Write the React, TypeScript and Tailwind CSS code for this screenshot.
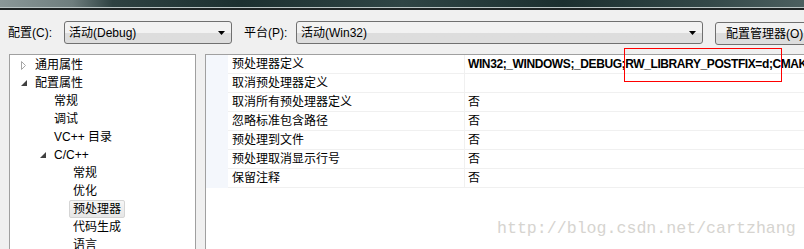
import React from 'react';

const FONT = { fontFamily: '"Liberation Sans", "Noto Sans CJK SC", sans-serif' };

type TreeItem = { label: string; level: number; toggle?: 'open' | 'closed'; selected?: boolean };

const treeItems: TreeItem[] = [
  { label: '通用属性', level: 0, toggle: 'closed' },
  { label: '配置属性', level: 0, toggle: 'open' },
  { label: '常规', level: 1 },
  { label: '调试', level: 1 },
  { label: 'VC++ 目录', level: 1 },
  { label: 'C/C++', level: 1, toggle: 'open' },
  { label: '常规', level: 2 },
  { label: '优化', level: 2 },
  { label: '预处理器', level: 2, selected: true },
  { label: '代码生成', level: 2 },
  { label: '语言', level: 2 },
];

const props: [string, string, boolean?][] = [
  ['预处理器定义', 'WIN32;_WINDOWS;_DEBUG;RW_LIBRARY_POSTFIX=d;CMAKE_INTDIR="Debug";%(PreprocessorDefinitions)', true],
  ['取消预处理器定义', ''],
  ['取消所有预处理器定义', '否'],
  ['忽略标准包含路径', '否'],
  ['预处理到文件', '否'],
  ['预处理取消显示行号', '否'],
  ['保留注释', '否'],
];

const Arrow = () => (
  <svg width="7" height="4" viewBox="0 0 7 4">
    <polygon points="0,0 7,0 3.5,4" fill="#000" />
  </svg>
);

const Toggle = ({ kind }: { kind: 'open' | 'closed' }) =>
  kind === 'closed' ? (
    <svg width="6" height="9" viewBox="0 0 6 9">
      <polygon points="0.5,0.5 4.5,4.5 0.5,8.5" fill="#fff" stroke="#a6a6a6" />
    </svg>
  ) : (
    <svg width="6" height="6" viewBox="0 0 6 6">
      <polygon points="6,0 6,6 0,6" fill="#404040" />
    </svg>
  );

const Combo = ({ text, width }: { text: string; width: string }) => (
  <div
    className={`${width} shrink-0 h-[23px] flex items-center justify-between pl-[4px] pr-[6px] border border-[#707070] rounded-[3px] bg-gradient-to-b from-[#f2f2f2] from-50% to-[#dddddd] to-50%`}
  >
    <span className="text-[12px] text-black">{text}</span>
    <Arrow />
  </div>
);

export default function App() {
  return (
    <div className="relative w-[804px] h-[249px] overflow-hidden bg-[#f0f0f0] text-black" style={FONT}>
      {/* window title strip */}
      <div className="h-[7px] bg-[linear-gradient(90deg,#8a9898_0%,#6e7e7e_9%,#2e4242_14%,#1c3030_30%,#2f4545_50%,#1b2f2f_70%,#334848_88%,#4c6060_100%)]" />
      <div className="h-px bg-[#b9c4c4]" />
      <div className="h-[2px] bg-[#1e2424]" />

      {/* toolbar */}
      <div className="flex items-center mt-[11px] h-[23px] w-[900px]">
        <span className="ml-[8px] w-[56px] shrink-0 text-[12px]">配置(C):</span>
        <Combo text="活动(Debug)" width="w-[168px]" />
        <span className="ml-[12px] w-[52px] shrink-0 text-[12px]">平台(P):</span>
        <Combo text="活动(Win32)" width="w-[407px]" />
        <div className="ml-[12px] mt-[2px] h-[23px] w-[120px] shrink-0 flex items-center pl-[10px] border border-[#707070] rounded-[3px] bg-gradient-to-b from-[#f2f2f2] from-50% to-[#dddddd] to-50% text-[12px] whitespace-nowrap">
          配置管理器(O)...
        </div>
      </div>

      {/* panels */}
      <div className="flex mt-[10px] h-[200px]">
        <div className="ml-[9px] w-[187px] shrink-0 border border-[#a0a0a0] bg-white pt-[1px]">
          {treeItems.map((it, i) => (
            <div key={i} className="h-[18px] flex items-center" style={{ paddingLeft: 11 + it.level * 19 }}>
              <span className="w-[14px] flex items-center">{it.toggle && <Toggle kind={it.toggle} />}</span>
              <span
                className={
                  it.selected
                    ? '-ml-[4px] px-[3px] h-[18px] flex items-center rounded-[2px] border border-[#d5d5d5] bg-gradient-to-b from-[#f6f6f6] to-[#e6e6e6] text-[12px]'
                    : 'text-[12px] whitespace-nowrap'
                }
              >
                {it.label}
              </span>
            </div>
          ))}
        </div>

        <div className="ml-[9px] w-[620px] shrink-0 border border-[#a0a0a0] bg-white">
          {props.map(([name, value, bold], i) => (
            <div key={i} className="flex h-[19px]">
              <div className="w-[22px] shrink-0 bg-[#f4f7fc]" />
              <div className="w-[237px] shrink-0 pl-[4px] flex items-center border-b border-r border-[#f0f0f0] text-[12px]">
                {name}
              </div>
              <div
                className={`flex-1 pl-[3px] flex items-center border-b border-[#f0f0f0] text-[12px] whitespace-nowrap overflow-hidden ${
                  bold ? 'font-bold tracking-[-0.4px]' : ''
                }`}
              >
                {value}
              </div>
            </div>
          ))}
        </div>
      </div>

      {/* red highlight */}
      <div className="absolute left-[624px] top-[48px] w-[158px] h-[34px] border border-[#ff0000]" />

      {/* watermark */}
      <div
        className="absolute left-[497px] top-[219px] text-[16.6px] leading-[20px] text-[#d6d4d0] whitespace-nowrap"
        style={{ fontFamily: '"Liberation Mono", monospace' }}
      >
        http://blog.csdn.net/cartzhang
      </div>
    </div>
  );
}
